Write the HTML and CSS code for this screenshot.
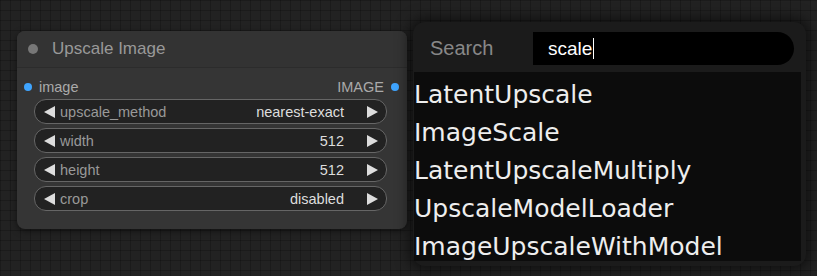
FILE: index.html
```html
<!DOCTYPE html>
<html lang="en">
<head>
    <meta charset="UTF-8">
    <title>Upscale Image</title>
    <link rel="stylesheet" href="styles.css">
</head>
<body>
    <div class="canvas">
        <!-- node -->
        <div class="node">
            <div class="node-title">
                <span class="title-dot"></span>
                <span>Upscale Image</span>
            </div>
            <div class="node-body">
                <div class="slots">
                    <div class="slot"><span class="slot-dot"></span>image</div>
                    <div class="slot">IMAGE<span class="slot-dot"></span></div>
                </div>
                <div class="widget">
                    <span class="arrow-left"></span>
                    <span class="w-label">upscale_method</span>
                    <span class="w-value">nearest-exact</span>
                    <span class="arrow-right"></span>
                </div>
                <div class="widget">
                    <span class="arrow-left"></span>
                    <span class="w-label">width</span>
                    <span class="w-value">512</span>
                    <span class="arrow-right"></span>
                </div>
                <div class="widget">
                    <span class="arrow-left"></span>
                    <span class="w-label">height</span>
                    <span class="w-value">512</span>
                    <span class="arrow-right"></span>
                </div>
                <div class="widget">
                    <span class="arrow-left"></span>
                    <span class="w-label">crop</span>
                    <span class="w-value">disabled</span>
                    <span class="arrow-right"></span>
                </div>
            </div>
        </div>

        <!-- search box -->
        <div class="searchbox">
            <div class="search-row">
                <span class="search-label">Search</span>
                <div class="search-input">scale<span class="caret"></span></div>
            </div>
            <div class="results">
                <div class="item">LatentUpscale</div>
                <div class="item">ImageScale</div>
                <div class="item">LatentUpscaleMultiply</div>
                <div class="item">UpscaleModelLoader</div>
                <div class="item">ImageUpscaleWithModel</div>
            </div>
        </div>
    </div>
</body>
</html>
```

FILE: styles.css
```css
body {
    margin: 0;
    background-color: #222;
    font-family: 'Liberation Sans', Arial, sans-serif;
}

.canvas {
    width: 817px;
    height: 276px;
    display: flex;
    align-items: flex-start;
    box-sizing: border-box;
    padding: 22px 0 0 17px;
    background-color: #222;
    background-image:
        linear-gradient(to right, rgba(0, 0, 0, 0.22) 1px, transparent 1px),
        linear-gradient(to bottom, rgba(0, 0, 0, 0.22) 1px, transparent 1px);
    background-size: 10px 10px;
    overflow: hidden;
}

/* node */
.node {
    width: 390px;
    height: 198px;
    margin-top: 9px;
    background-color: #353535;
    border-radius: 8px;
    box-shadow: 0 2px 6px rgba(0, 0, 0, 0.5);
}

.node-title {
    height: 36px;
    display: flex;
    align-items: center;
    gap: 14px;
    padding-left: 11px;
    color: #999;
    font-size: 17px;
    border-bottom: 1px solid #2c2c2c;
    background-color: #333;
    border-radius: 8px 8px 0 0;
}

.title-dot {
    width: 10px;
    height: 10px;
    border-radius: 50%;
    background-color: #777;
}

.node-body {
    padding: 7px 0 0 0;
}

.slots {
    display: flex;
    justify-content: space-between;
    height: 24px;
    align-items: center;
    padding: 0 8px 0 7px;
    color: #aaa;
    font-size: 14.5px;
}

.slot {
    display: flex;
    align-items: center;
    gap: 7px;
}

.slot-dot {
    width: 8px;
    height: 8px;
    border-radius: 50%;
    background-color: #3fa5ff;
}

.widget {
    height: 23px;
    margin: 0 20px 4px 17px;
    display: flex;
    align-items: center;
    border: 1px solid #666;
    border-radius: 12px;
    background-color: #222;
    padding: 0 8px 0 9px;
    font-size: 14.5px;
}

.w-label {
    color: #999;
    margin-left: 5px;
    flex: 1;
}

.w-value {
    color: #ddd;
    margin-right: 23px;
}

.arrow-left,
.arrow-right {
    width: 0;
    height: 0;
    border-top: 6px solid transparent;
    border-bottom: 6px solid transparent;
}

.arrow-left {
    border-right: 11px solid #ddd;
}

.arrow-right {
    border-left: 11px solid #ddd;
}

/* search box */
.searchbox {
    width: 393px;
    height: 244px;
    margin-left: 6px;
    background-color: #1b1b1b;
    border-radius: 12px;
    box-shadow: 0 0 14px 4px rgba(0, 0, 0, 0.55);
    box-sizing: border-box;
    padding: 10px 5px 0 1px;
}

.search-row {
    display: flex;
    align-items: center;
    height: 33px;
    margin-bottom: 7px;
}

.search-label {
    width: 119px;
    padding-left: 16px;
    box-sizing: border-box;
    color: #888;
    font-size: 20px;
}

.search-input {
    flex: 1;
    height: 33px;
    margin-right: 7px;
    background-color: #000;
    border-radius: 0 17px 17px 0;
    display: flex;
    align-items: center;
    padding-left: 15px;
    color: #fff;
    font-size: 19px;
}

.caret {
    width: 1px;
    height: 21px;
    background-color: #fff;
    margin-left: 1px;
}

.results {
    height: 189px;
    background-color: #0c0c0c;
    overflow: hidden;
    padding-top: 4px;
    box-sizing: border-box;
}

.item {
    height: 38px;
    line-height: 38px;
    color: #eee;
    font-size: 25px;
    font-family: 'DejaVu Sans', Verdana, sans-serif;
}
```
